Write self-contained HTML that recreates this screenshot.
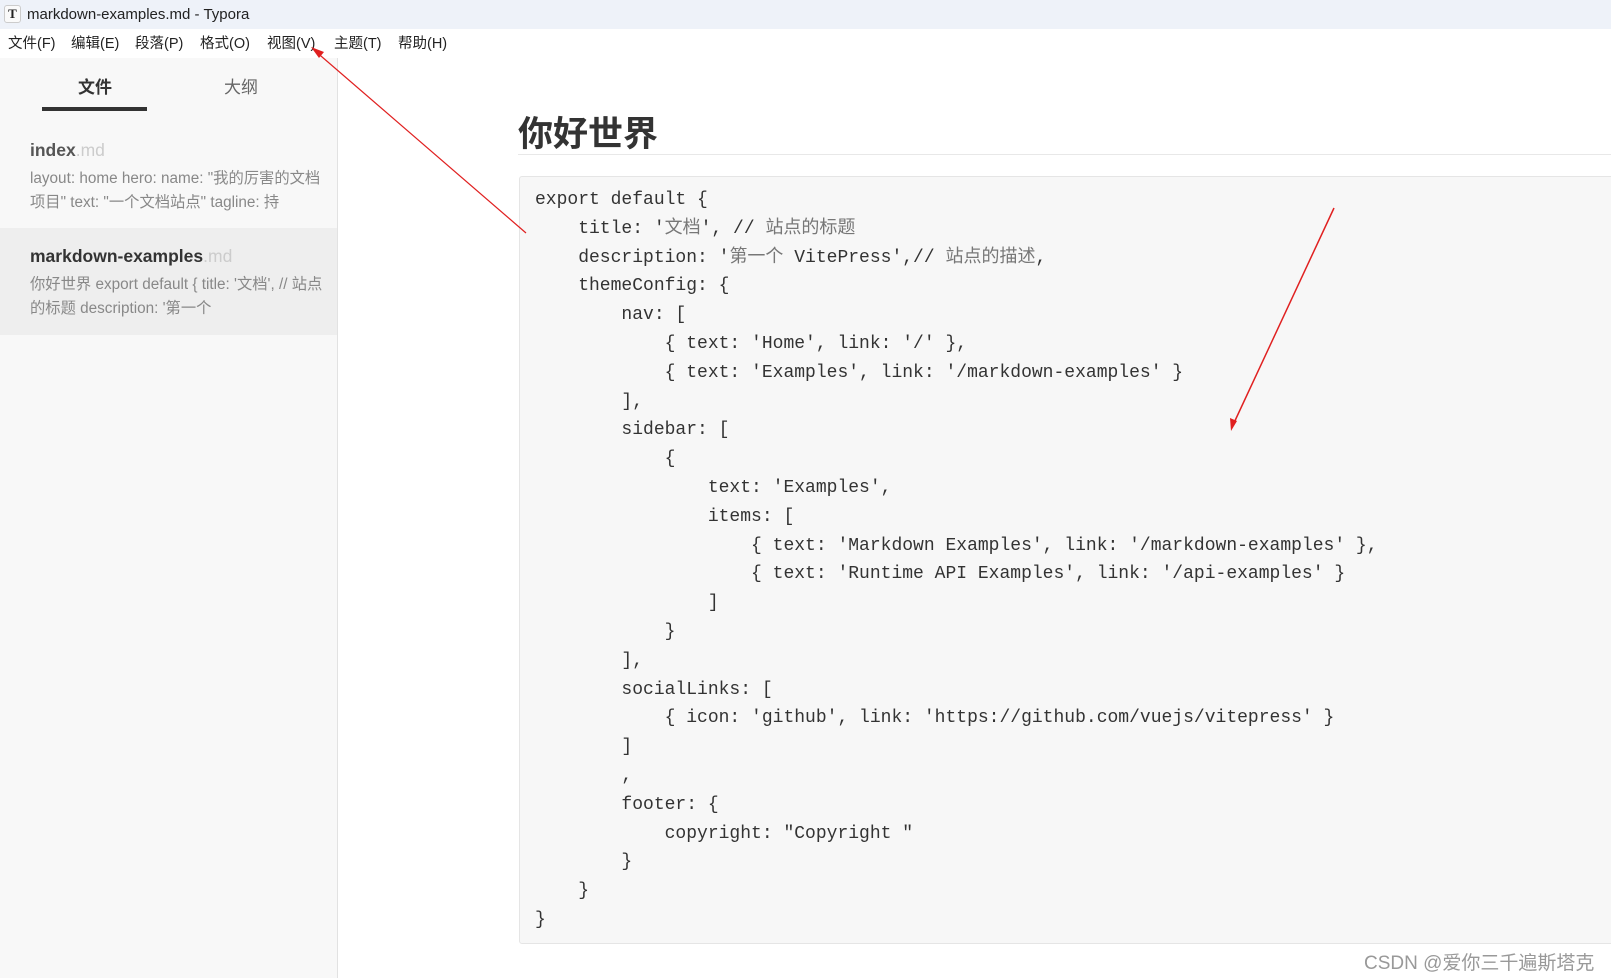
<!DOCTYPE html>
<html><head><meta charset="utf-8"><style>
*{margin:0;padding:0;box-sizing:border-box}
body{width:1611px;height:978px;overflow:hidden;background:#fff;font-family:"Liberation Sans","Noto Sans CJK SC",sans-serif;position:relative;color:#333}
.title{position:absolute;left:0;top:0;width:1611px;height:29px;background:#eef2f9;font-size:15px;line-height:29px;padding-left:27px;color:#222}
.ticon{position:absolute;left:4px;top:5px;width:17px;height:18px;border:1px solid #ccc;border-radius:3px;background:#fafafa;font-family:"Liberation Serif",serif;font-weight:bold;font-size:13px;line-height:16px;text-align:center}
.menu{position:absolute;left:0;top:31px;height:29px;font-size:14.5px;line-height:27px;color:#222}
.menu span{position:absolute;white-space:nowrap}
.side{position:absolute;left:0;top:58px;width:338px;height:920px;background:#f8f8f8;border-right:1px solid #e2e2e2}
.tab{position:absolute;top:15px;font-size:17px}
.ul{position:absolute;left:42px;top:49px;width:105px;height:4px;background:#333}
.item{position:absolute;left:0;width:337px;padding-left:30px;padding-right:10px}
.item b{font-size:17.5px;color:#555}
.item b i{font-style:normal;font-weight:normal;color:#ccc}
.item p{font-size:15.3px;color:#888;line-height:24px;margin-top:6px}
h1{position:absolute;left:518px;top:106px;font-size:35px;color:#333;font-weight:bold}
.hr{position:absolute;left:518px;top:154px;width:1093px;height:1px;background:#e8e8e8}
.code{position:absolute;left:519px;top:176px;width:1100px;height:768px;background:#f7f7f7;border:1px solid #e5e5e5;border-radius:3px}
pre{position:absolute;left:535px;top:186px;font-family:"Liberation Mono","Noto Sans CJK SC",monospace;font-size:18px;line-height:28.8px;color:#333}
.c{color:#777}
.wm{position:absolute;left:1364px;top:948px;font-size:19px;color:#999}
</style></head><body>
<div class="title"><div class="ticon">T</div>markdown-examples.md - Typora</div>
<div class="menu">
<span style="left:8px">文件(F)</span><span style="left:71px">编辑(E)</span><span style="left:135px">段落(P)</span><span style="left:200px">格式(O)</span><span style="left:267px">视图(V)</span><span style="left:334px">主题(T)</span><span style="left:398px">帮助(H)</span>
</div>
<div class="side">
<div class="tab" style="left:78px;font-weight:bold;color:#333">文件</div>
<div class="tab" style="left:224px;color:#666">大纲</div>
<div class="ul"></div>
<div class="item" style="top:82px"><b>index<i>.md</i></b><p>layout: home hero: name: "我的厉害的文档项目" text: "一个文档站点" tagline: 持</p></div>
<div class="item" style="top:170px;height:107px;background:#eee;padding-top:18px"><b style="color:#333">markdown-examples<i>.md</i></b><p>你好世界 export default { title: '文档', // 站点的标题 description: '第一个</p></div>
</div>
<h1>你好世界</h1>
<div class="hr"></div>
<div class="code"></div>
<pre>export default {
    title: '<span class="c">文档</span>', // <span class="c">站点的标题</span>
    description: '<span class="c">第一个</span> VitePress',// <span class="c">站点的描述</span>,
    themeConfig: {
        nav: [
            { text: 'Home', link: '/' },
            { text: 'Examples', link: '/markdown-examples' }
        ],
        sidebar: [
            {
                text: 'Examples',
                items: [
                    { text: 'Markdown Examples', link: '/markdown-examples' },
                    { text: 'Runtime API Examples', link: '/api-examples' }
                ]
            }
        ],
        socialLinks: [
            { icon: 'github', link: 'https://github.com/vuejs/vitepress' }
        ]
        ,
        footer: {
            copyright: "Copyright "
        }
    }
}</pre>
<div class="wm">CSDN @爱你三千遍斯塔克</div>
<svg style="position:absolute;left:0;top:0" width="1611" height="978">
<line x1="526" y1="233" x2="314" y2="50" stroke="#e02020" stroke-width="1.2"/>
<polygon points="311,47 324,52 319,58" fill="#e02020"/>
<line x1="1334" y1="208" x2="1233" y2="425" stroke="#e02020" stroke-width="1.5"/>
<polygon points="1231,431 1230,418 1237,421" fill="#e02020"/>
</svg>
</body></html>
